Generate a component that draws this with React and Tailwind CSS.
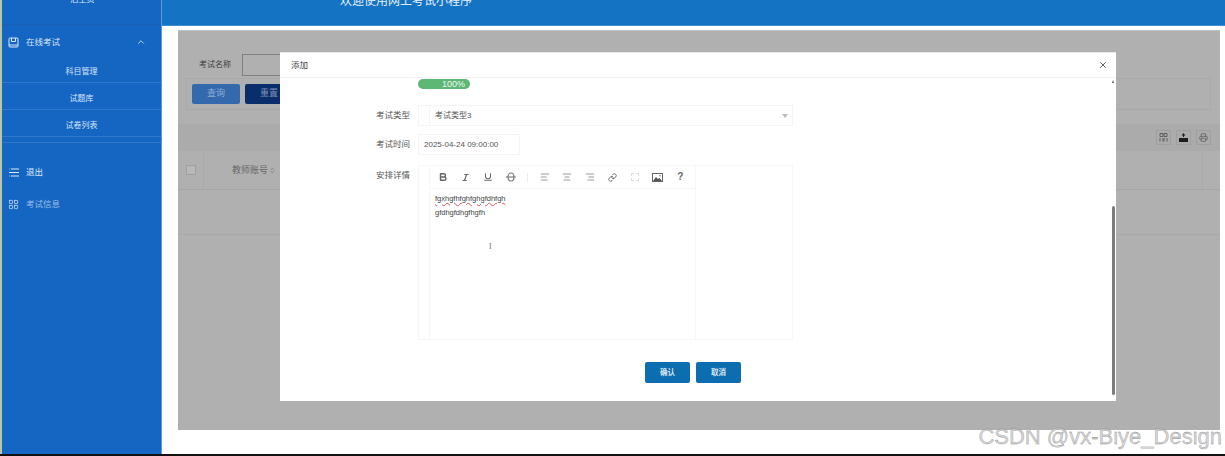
import React from "react";
import { ChevronUp, LayoutGrid, X, Printer, Bold, Italic, Underline, AlignLeft, AlignCenter, AlignRight, Link, ChevronsUpDown } from "lucide-react";

const font = { fontFamily: '"Liberation Sans","Noto Sans CJK SC",sans-serif' };

function SubItem({ children }) {
  return <div className="h-[27px] pt-[6px] flex items-center justify-center border-b border-[#2f77c9] text-[8px] text-[#d5e4f6]">{children}</div>;
}

function Tool({ children }) {
  return <span className="w-[22.6px] flex justify-center text-[#666]">{children}</span>;
}

function BookIcon() {
  return (
    <svg width="11" height="11" viewBox="0 0 11 11" fill="none" stroke="currentColor" strokeWidth="1">
      <rect x="1" y="1" width="9" height="9" rx="1" />
      <path d="M3.5 1v3.5h4V1M1 8h9" />
    </svg>
  );
}

function ExitIcon() {
  return (
    <svg width="11" height="9" viewBox="0 0 11 9" fill="none" stroke="currentColor" strokeWidth="1">
      <path d="M3 1h8M3 8h8M1 4.5h10" />
      <path d="M1 1h.6M1 8h.6" />
    </svg>
  );
}

function StrikeIcon() {
  return (
    <svg width="10" height="10" viewBox="0 0 10 10" fill="none" stroke="#777" strokeWidth="1.1">
      <ellipse cx="5" cy="5" rx="3" ry="4" />
      <path d="M0 5h10" />
    </svg>
  );
}

function PictureIcon() {
  return (
    <svg width="11" height="9" viewBox="0 0 11 9">
      <rect x="0.5" y="0.5" width="10" height="8" fill="none" stroke="#666" />
      <path d="M1 8l3-4 2 2 1.5-1L10 8z" fill="#555" />
      <circle cx="8" cy="2.6" r="0.9" fill="#999" />
    </svg>
  );
}

function ColumnsIcon() {
  return (
    <svg width="9" height="9" viewBox="0 0 9 9" fill="none" stroke="#5e5e5e">
      <path d="M1 .5h3v3H1zM5 .5h3v3H5zM1 5v3.5M4 5v3.5M5 5v3.5M8 5v3.5" />
    </svg>
  );
}

function ExportIcon() {
  return (
    <svg width="9" height="9" viewBox="0 0 9 9" fill="#1c1c1c">
      <path d="M0 5h9v4H0zM4 1h1v3H4zM2.6 2.4 4.5 0l1.9 2.4z" />
    </svg>
  );
}

function Field({ label, children, h = "h-[21px]", mt, lead = "leading-[21px]" }) {
  return (
    <div className={`flex ${h} ${mt}`}>
      <div className={`w-[130px] text-right text-[8.5px] text-[#555] ${lead}`}>{label}</div>
      {children}
    </div>
  );
}

export default function App() {
  return (
    <div style={font} className="relative w-[1225px] h-[456px] overflow-hidden bg-white flex flex-col">
      <div className="flex flex-1 min-h-0">
        <div className="w-[2px] bg-[#b9c6a8]" />
        <aside className="w-[160px] bg-[#1565c3] border-r border-[#5f97d8] flex flex-col text-[#dbe7f6]">
          <div className="h-[25px] border-b border-[#1a60b6] text-[8px] flex justify-center"><span className="-mt-[6px] ml-[2px]">后主页</span></div>
          <div className="h-[34px] flex items-center pl-[6px] pr-[15px] text-[8.5px]">
            <BookIcon />
            <span className="ml-[7px] flex-1">在线考试</span>
            <ChevronUp size={10} />
          </div>
          <div className="h-[81px] mt-[-3px]">
            <SubItem>科目管理</SubItem>
            <SubItem>试题库</SubItem>
            <SubItem>试卷列表</SubItem>
          </div>
          <div className="h-[6px] border-b border-[#2f77c9]" />
          <div className="h-[32px] mt-[13px] flex items-center pl-[6px] text-[8.5px]">
            <ExitIcon />
            <span className="ml-[7px]">退出</span>
          </div>
          <div className="h-[32px] flex items-center pl-[6px] text-[8.5px] text-[#9dbde6]">
            <LayoutGrid size={11} strokeWidth={1.5} className="text-[#dbe7f6]" />
            <span className="ml-[7px]">考试信息</span>
          </div>
        </aside>
        <main className="flex-1 min-w-0 flex flex-col">
          <header className="h-[26px] bg-[#1473c2] border-b border-[#3f8fd2] overflow-hidden text-[12px] text-[#e6f0fa] pl-[178px] leading-none">
            <div className="-mt-[5px]">欢迎使用网上考试小程序</div>
          </header>
          <div className="flex-1 pl-[16px] pr-[5px] pt-[4px] pb-[24px] min-h-0">
            <div className="relative h-full bg-[#b0b0b0] border-t border-[#c4c4c4]">
              <div className="h-[93px] pl-[8px] pr-[9px] pt-[23px]">
                <div className="flex items-center text-[8px] text-[#3d3d3d] h-[22px]">
                  <span className="w-[56px] pl-[13px]">考试名称</span>
                  <div className="w-[60px] h-[22px] border border-[#808080]" />
                </div>
                <div className="flex gap-[5px] h-[32px] mt-[2px] items-center pl-[5px] text-[9px] border border-[#a9a9a9]">
                  <div className="w-[48px] h-[20px] rounded-[2px] bg-[#346aad] text-[#8fabd0] flex items-center justify-center">查询</div>
                  <div className="w-[48px] h-[20px] rounded-[2px] bg-[#0a2e6b] text-[#7f8fb0] flex items-center justify-center">重置</div>
                </div>
              </div>
              <div className="h-[27px] bg-[#ababab] flex items-center justify-end gap-[5px] pr-[9px] text-[#5e5e5e]">
                <div className="w-[15px] h-[15px] border border-[#a0a0a0] flex items-center justify-center"><ColumnsIcon /></div>
                <div className="w-[15px] h-[15px] border border-[#a0a0a0] flex items-center justify-center"><ExportIcon /></div>
                <div className="w-[15px] h-[15px] border border-[#a0a0a0] flex items-center justify-center"><Printer size={9} /></div>
              </div>
              <div className="h-[39px] border-b border-[#a6a6a6] flex items-center text-[9px] text-[#666]">
                <div className="w-[26px] h-full border-r border-[#a9a9a9] flex items-center justify-center">
                  <div className="w-[10px] h-[10px] border border-[#a0a0a0] bg-[#b8b8b8]" />
                </div>
                <div className="ml-[28px] mt-[1px] flex items-center gap-[1px]">教师账号<ChevronsUpDown size={7} /></div>
                <div className="ml-auto mr-[95px] text-[#8a8a8a]"><ChevronsUpDown size={6} /></div>
                <div className="h-full border-l border-[#a9a9a9] mr-[17px]" />
              </div>
              <div className="h-[45px] border-b border-[#a9a9a9]" />

              <div className="absolute left-[102px] top-[21px] w-[836px] h-[349px] bg-white border-t border-[#e8e8e8] flex flex-col">
                <div className="h-[25px] shrink-0 border-b border-[#f2f2f2] flex items-center justify-between pl-[11px] pr-[8px] text-[8.5px] text-[#444]">
                  <span className="mt-[1px]">添加</span>
                  <X size={10} className="text-[#444]" strokeWidth={2} />
                </div>
                <div className="relative flex-1 min-h-0 flex flex-col">
                  <div className="absolute right-[1px] top-0 bottom-0 w-[3px]">
                    <div className="absolute top-[2px] left-0 w-0 h-0 border-x-[1.5px] border-x-transparent border-b-[3px] border-b-[#555]" />
                    <div className="absolute top-[128px] bottom-[6px] left-0 right-0 bg-[#7d7d7d] rounded-[2px]" />
                  </div>
                  <div className="pl-[138px] pt-[1px]">
                    <div className="w-[52px] h-[10px] rounded-full bg-[#5cb874] text-[#f0f7f2] text-[9px] leading-[10px] text-right pr-[5px]">100%</div>
                  </div>
                  <Field label="考试类型" mt="mt-[16px]">
                    <div className="ml-[8px] w-[375px] border border-[#f4f4f4] flex items-center text-[8px] text-[#555]">
                      <div className="w-[11px] h-full border-r border-[#f4f4f4]" />
                      <span className="ml-[5px] flex-1">考试类型3</span>
                      <span className="mr-[4px] w-0 h-0 border-x-[3px] border-x-transparent border-t-[4px] border-t-[#bbb]" />
                    </div>
                  </Field>
                  <Field label="考试时间" mt="mt-[8px]">
                    <div className="ml-[8px] w-[102px] border border-[#f4f4f4] pl-[5px] text-[8px] leading-[19px] text-[#555]">2025-04-24 09:00:00</div>
                  </Field>
                  <Field label="安排详情" h="h-[175px]" mt="mt-[10px]" lead="leading-[20px]">
                    <div className="ml-[8px] w-[375px] border border-[#f7f7f7] flex">
                      <div className="w-[11px] shrink-0 border-r border-[#f7f7f7]" />
                      <div className="w-[266px] border-r border-[#f7f7f7] flex flex-col">
                        <div className="h-[23px] border-b border-[#f7f7f7] flex items-center pl-[2px]">
                          <Tool><Bold size={10} strokeWidth={3.5} /></Tool>
                          <Tool><Italic size={9} strokeWidth={3} /></Tool>
                          <Tool><Underline size={10} strokeWidth={2.5} /></Tool>
                          <Tool><StrikeIcon /></Tool>
                          <span className="w-[1px] h-[9px] bg-[#eee] mx-[5px]" />
                          <Tool><AlignLeft size={10} strokeWidth={2.5} className="text-[#999]" /></Tool>
                          <Tool><AlignCenter size={10} strokeWidth={2.5} className="text-[#999]" /></Tool>
                          <Tool><AlignRight size={10} strokeWidth={2.5} className="text-[#999]" /></Tool>
                          <Tool><Link size={9} strokeWidth={2.5} /></Tool>
                          <span className="w-[22.6px] flex justify-center">
                            <span className="w-[8px] h-[8px] border border-dashed border-[#ddd]" />
                          </span>
                          <Tool><PictureIcon /></Tool>
                          <Tool><span className="text-[10px] leading-none font-bold">?</span></Tool>
                        </div>
                        <div className="relative flex-1 pl-[5px] pt-[3px] text-[7.5px] text-[#444] leading-[14px]">
                          <div className="underline decoration-wavy decoration-[#e05555] decoration-[1px]">fgxhgfhfghfghgfdhfgh</div>
                          <div>gfdhgfdhgfhgfh</div>
                          <span className="absolute left-[59px] top-[53px] text-[8px] leading-[10px] text-[#777]" style={{ fontFamily: '"Liberation Serif",serif' }}>I</span>
                        </div>
                      </div>
                    </div>
                  </Field>
                  <div className="flex gap-[6px] pl-[365px] mt-[22px] text-[7.5px] font-bold text-[#dbe8f3]">
                    <div className="w-[45px] h-[21px] rounded-[2px] bg-[#0c6eb0] flex items-center justify-center">确认</div>
                    <div className="w-[45px] h-[21px] rounded-[2px] bg-[#0c6eb0] flex items-center justify-center">取消</div>
                  </div>
                </div>
              </div>
            </div>
          </div>
        </main>
      </div>
      <div className="h-[2px] bg-[#111] shrink-0" />
      <div className="absolute right-[3px] top-[422px] text-[22px] leading-[30px] text-[#d6d6d6]" style={{ fontFamily: '"Liberation Sans",sans-serif', WebkitTextStroke: "0.3px #888" }}>CSDN @vx-Biye_Design</div>
    </div>
  );
}
